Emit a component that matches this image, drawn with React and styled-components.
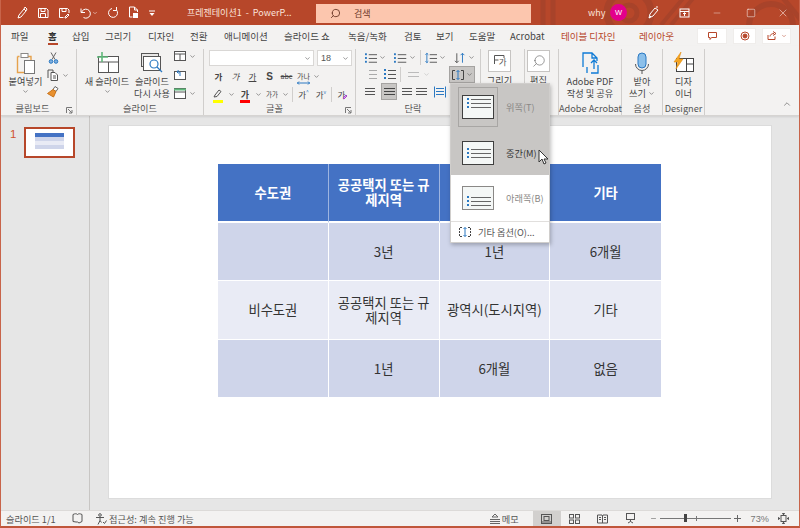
import React from 'react'
import styled, { createGlobalStyle } from 'styled-components'
import { ChevronDown, Search, Minus, Square, X, ChevronUp } from 'lucide-react'

const Global = createGlobalStyle`
  * { box-sizing: border-box; }
  html, body { margin: 0; padding: 0; }
  body { font-family: "Noto Sans CJK KR", "Noto Sans", sans-serif; background: #b7472a; }
`

const Win = styled.div`
  width: 800px;
  height: 528px;
  display: flex;
  flex-direction: column;
  background: #f3f2f1;
  border: 1px solid #c8644a;
  border-top: 0;
  border-bottom: 2px solid #c0563b;
  overflow: hidden;
  position: relative;
`

/* ---------- title bar ---------- */
const TitleBar = styled.div`
  height: 25px;
  flex: none;
  background: #b7472a;
  display: flex;
  align-items: center;
  color: #fff;
  position: relative;
  overflow: hidden;
  padding-left: 15px;
`
const Pattern = styled.svg`
  position: absolute;
  left: 520px;
  top: 0;
`
const Qat = styled.div`
  display: flex;
  align-items: center;
  gap: 9px;
  width: 171px;
  flex: none;
  position: relative;
`
const DocTitle = styled.div`
  width: 129px;
  flex: none;
  font-size: 9px;
  color: #fbe3db;
  white-space: pre;
  position: relative;
`
const SearchBox = styled.div`
  width: 215px;
  height: 19px;
  margin-top: 1px;
  background: #fcc6ae;
  display: flex;
  align-items: center;
  gap: 13px;
  padding-left: 14px;
  font-size: 9px;
  color: #6e3a2a;
  flex: none;
  position: relative;
`
const TitleRight = styled.div`
  margin-left: 57px;
  display: flex;
  align-items: center;
  position: relative;
  flex: 1;
`
const User = styled.span`
  font-size: 9px;
  color: #fbe3db;
  width: 22px;
  flex: none;
`
const Avatar = styled.span`
  width: 17px;
  height: 17px;
  flex: none;
  border-radius: 50%;
  background: #e3008c;
  color: #fff;
  font-size: 7.5px;
  font-family: "Liberation Sans", sans-serif;
  display: flex;
  align-items: center;
  justify-content: center;
`
const TitleBtn = styled.span`
  width: ${p => p.$w}px;
  margin-left: ${p => p.$ml ?? 0}px;
  display: flex;
  justify-content: center;
  flex: none;
`

/* ---------- tabs ---------- */
const TabBar = styled.div`
  height: 21px;
  flex: none;
  display: flex;
  align-items: center;
  padding-left: 10px;
  background: #f3f2f1;
  font-size: 9.5px;
  color: #444;
`
const Tab = styled.span`
  width: ${p => p.$w}px;
  flex: none;
  white-space: nowrap;
  position: relative;
  line-height: 20px;
  color: ${p => (p.$ctx ? '#b7472a' : p.$active ? '#333' : '#444')};
  font-weight: ${p => (p.$active ? 600 : 400)};
`
const TabLine = styled.i`
  position: absolute;
  left: 0;
  bottom: 1px;
  width: 10px;
  height: 2px;
  background: #b7472a;
`
const TabActions = styled.div`
  margin-left: auto;
  display: flex;
  gap: 6px;
  padding-right: 8px;
`
const TabAction = styled.span`
  width: ${p => p.$w}px;
  height: 16px;
  background: #fff;
  border: 1px solid #efedeb;
  display: flex;
  align-items: center;
  justify-content: center;
  gap: 4px;
  color: #b7472a;
`

/* ---------- ribbon ---------- */
const Ribbon = styled.div`
  height: 70px;
  flex: none;
  display: flex;
  background: #f3f2f1;
  border-bottom: 1px solid #d6d4d2;
  box-shadow: 0 1px 2px rgba(0, 0, 0, 0.1);
  position: relative;
  z-index: 1;
`
const Group = styled.div`
  width: ${p => p.$w}px;
  flex: none;
  height: 66px;
  margin-top: 3px;
  border-right: 1px solid #d0cecc;
  display: flex;
  flex-direction: column;
  position: relative;
`
const GroupBody = styled.div`
  flex: 1;
  display: flex;
  min-height: 0;
`
const GroupLabel = styled.div`
  height: 13px;
  line-height: 13px;
  font-size: 9.2px;
  text-align: center;
  color: #555;
  white-space: nowrap;
  padding-right: ${p => p.$pr ?? 0}px;
`
const Launcher = styled.svg`
  position: absolute;
  right: 3px;
  bottom: 1px;
`
const Big = styled.div`
  width: ${p => p.$w}px;
  margin-left: ${p => p.$ml ?? 0}px;
  flex: none;
  display: flex;
  flex-direction: column;
  align-items: center;
  font-size: 9.2px;
  line-height: 11.5px;
  color: #444;
  text-align: center;
  white-space: pre;
`
const BigIcon = styled.div`
  height: 26px;
  padding-top: 3px;
  display: flex;
  align-items: flex-start;
  justify-content: center;
  margin-bottom: 1px;
`
const SmallCol = styled.div`
  display: flex;
  flex-direction: column;
  justify-content: space-between;
  padding: ${p => p.$pad};
`
const Caret = styled(ChevronDown).attrs({ size: 7, strokeWidth: 2 })`
  color: #555;
  flex: none;
`
const IconRow = styled.div`
  display: flex;
  align-items: center;
  gap: ${p => p.$gap ?? 3}px;
`
const FontCol = styled.div`
  display: flex;
  flex-direction: column;
  padding: 1px 0 0 5px;
  gap: 4px;
`
const FontInputs = styled.div`
  display: flex;
  gap: 3px;
`
const Input = styled.div`
  width: ${p => p.$w}px;
  height: 16px;
  background: #fff;
  border: 1px solid #d9d7d5;
  display: flex;
  align-items: center;
  justify-content: space-between;
  padding: 0 2px 0 3px;
  font-size: 9px;
  color: #555;
  font-family: "Liberation Sans", sans-serif;
`
const FontBtns = styled.div`
  display: flex;
  align-items: center;
  gap: ${p => p.$gap ?? 3}px;
  height: ${p => p.$h}px;
  padding-left: 2px;
`
const Glyph = styled.span`
  width: ${p => p.$w || 15}px;
  flex: none;
  text-align: center;
  font-size: ${p => p.$size || 8.5}px;
  color: #444;
  font-weight: ${p => (p.$bold ? 700 : 400)};
  text-decoration: ${p => p.$deco || 'none'};
  position: relative;
  line-height: 11px;
`
const Swatch = styled.i`
  position: absolute;
  left: 2px;
  right: 2px;
  bottom: -3px;
  height: 3px;
  background: ${p => p.$c};
`
const Spread = styled.svg`
  position: absolute;
  left: 1px;
  bottom: -3px;
`
const Sup = styled.sup`
  font-size: 5px;
  color: #2b79c2;
  line-height: 0;
`
const VRule = styled.i`
  width: 1px;
  height: 15px;
  margin-left: ${p => p.$ml ?? 0}px;
  margin-right: ${p => p.$mr ?? 0}px;
  background: #d0cecc;
  flex: none;
`
const ParaCol = styled.div`
  display: flex;
  flex-direction: column;
  gap: 2px;
  width: 119px;
  padding: 1px 0 0 9px;
`
const ParaRow = styled.div`
  display: flex;
  align-items: center;
  gap: ${p => p.$gap ?? 3}px;
  height: 15px;
`
const Pressed = styled.span`
  display: inline-flex;
  align-items: center;
  justify-content: center;
  gap: 2px;
  flex: none;
  margin-left: ${p => (p.$push ? 'auto' : 0)};
  width: ${p => p.$w}px;
  height: 17px;
  background: #c8c6c4;
  border: 1px solid #a5a3a1;
`
const BoxBtn = styled.div`
  width: 23px;
  height: 22px;
  background: #fff;
  border: 1px solid #c6c4c2;
  display: flex;
  align-items: center;
  justify-content: center;
  flex: none;
`
const Stub = styled.div`
  display: flex;
  flex-direction: column;
  align-items: center;
  gap: 1px;
  padding: 1px 6px 0 0;
  width: 100%;
  font-size: 9.2px;
  color: #444;
`
const BoxGlyph = styled.span`
  position: relative;
  width: 14px;
  height: 14px;
  font-size: 8.5px;
  line-height: 14px;
  text-align: right;
  color: #555;
`
const BoxCorner = styled.svg`
  position: absolute;
  left: 0;
  top: 0;
`
const Collapse = styled(ChevronUp)`
  position: absolute;
  right: 7px;
  bottom: 6px;
  color: #555;
`

/* ---------- dropdown ---------- */
const Menu = styled.div`
  position: absolute;
  left: 449px;
  top: 83px;
  width: 100px;
  height: 160px;
  background: #fff;
  border: 1px solid #d0cecc;
  box-shadow: 1px 2px 4px rgba(0, 0, 0, 0.25);
  z-index: 5;
  display: flex;
  flex-direction: column;
`
const MenuItem = styled.div`
  height: ${p => p.$h}px;
  flex: none;
  background: ${p => (p.$on ? '#c8c6c4' : 'transparent')};
  display: flex;
  align-items: center;
  padding-left: 11px;
  gap: 12px;
  font-size: 9.2px;
  color: ${p => p.$color};
`
const MenuIconWrap = styled.span`
  width: 40px;
  height: 40px;
  margin: 0 -4px;
  display: flex;
  align-items: center;
  justify-content: center;
  flex: none;
  border: ${p => (p.$box ? '1px solid #a8a6a4' : '0')};
`
const MenuFoot = styled.div`
  flex: 1;
  border-top: 1px solid #e1dfdd;
  display: flex;
  align-items: center;
  padding-left: 8px;
  gap: 7px;
  font-size: 9.2px;
  color: #555;
`
const Cursor = styled.svg`
  position: absolute;
  left: 537px;
  top: 149px;
  z-index: 6;
`

/* ---------- workspace ---------- */
const Workspace = styled.div`
  flex: 1;
  min-height: 0;
  display: flex;
  background: #e6e6e6;
`
const Sidebar = styled.div`
  width: 89px;
  flex: none;
  border-right: 1px solid #c8c6c4;
  padding: 11px 0 0 9px;
  display: flex;
  gap: 7px;
  align-items: flex-start;
`
const SlideNum = styled.span`
  font-size: 11.5px;
  line-height: 15px;
  width: 7px;
  color: #d0532f;
  font-family: "Liberation Sans", sans-serif;
`
const Thumb = styled.div`
  width: 51px;
  height: 31px;
  background: #fff;
  border: 2px solid #b7472a;
  padding: 4px 9px 0;
`
const ThumbRow = styled.div`
  height: ${p => p.$h}px;
  background: ${p => p.$c};
`
const Stage = styled.div`
  flex: 1;
  padding: 9px 0 0 18px;
`
const Slide = styled.div`
  width: 664px;
  height: 374px;
  background: #fff;
  border: 1px solid #dcdcdc;
  padding: 38px 0 0 109px;
`
const Table = styled.div`
  width: 443px;
  display: grid;
  grid-template-columns: repeat(4, 1fr);
  grid-auto-rows: 58.5px;
`
const Cell = styled.div`
  display: flex;
  align-items: center;
  justify-content: center;
  text-align: center;
  padding: 0 7px;
  font-size: 13.3px;
  line-height: 15px;
  word-break: break-all;
  font-weight: ${p => (p.$head ? 700 : 400)};
  color: ${p => (p.$head ? '#fff' : '#333')};
  background: ${p => (p.$head ? '#4472c4' : p.$odd ? '#cfd5ea' : '#e9ebf5')};
  border-right: 1px solid ${p => (p.$head ? '#9db4e0' : '#fff')};
  border-bottom: ${p => (p.$head ? 2 : 1)}px solid #fff;
  &:nth-child(4n) { border-right: 0; }
`

/* ---------- status bar ---------- */
const Status = styled.div`
  height: 16px;
  flex: none;
  display: flex;
  align-items: center;
  padding: 0 10px 0 5px;
  font-size: 9.2px;
  color: #555;
  background: #f3f2f1;
  border-top: 1px solid #dcdad8;
`
const StatusGroup = styled.div`
  display: flex;
  align-items: center;
  gap: ${p => p.$gap ?? 0}px;
  margin-left: ${p => p.$ml ?? 0}px;
  color: ${p => p.$color || 'inherit'};
  font-family: ${p => (p.$latin ? '"Liberation Sans", sans-serif' : 'inherit')};
`
const PageCount = styled.span`
  width: 66px;
  flex: none;
`
const StatusRight = styled.div`
  margin-left: auto;
  display: flex;
  align-items: center;
`
const ViewBtn = styled.span`
  width: 28px;
  height: 15px;
  display: flex;
  align-items: center;
  justify-content: center;
  background: ${p => (p.$on ? '#d2d0ce' : 'transparent')};
`
const Zoom = styled.div`
  width: 71px;
  height: 1px;
  background: #777;
  position: relative;
  margin: 0 3px;
`
const Knob = styled.i`
  position: absolute;
  left: 24px;
  top: -4px;
  width: 3px;
  height: 8px;
  background: #444;
`
const Tick = styled.i`
  position: absolute;
  left: 36px;
  top: -2px;
  width: 1px;
  height: 5px;
  background: #777;
`

/* ---------- icons ---------- */
const Ic = ({ w = 14, h = 14, c = '#fff', sw = 1, children, ...rest }) => (
  <svg width={w} height={h} viewBox={`0 0 ${w} ${h}`} fill="none" stroke={c} strokeWidth={sw} {...rest}>
    {children}
  </svg>
)

const TextLines = ({ x = 0, y = 0, n = 3, w = 12, c = '#555', gap = 3, bullets, blue = '#2b79c2' }) => (
  <g>
    {Array.from({ length: n }).map((_, i) => (
      <g key={i}>
        {bullets && <rect x={x - 4} y={y + i * gap - 1} width="2" height="2" fill={blue} stroke="none" />}
        <path d={`M${x} ${y + i * gap + 0.5}h${w}`} stroke={c} />
      </g>
    ))}
  </g>
)

const AnchorIcon = ({ start, dark }) => (
  <Ic w={32} h={24} c={dark ? '#3f3f3f' : '#8a8886'}>
    <rect x="0.5" y="0.5" width="31" height="23" fill="#f4f7f6" />
    <TextLines x={9} y={start} n={3} w={20} c="#666" gap={4} bullets />
  </Ic>
)

const Launch = () => (
  <Launcher width="7" height="7" stroke="#777" fill="none">
    <path d="M.5 6V.5H6M2 2l4 4M3 6h3V3" />
  </Launcher>
)

const App = () => (
  <>
    <Global />
    <Win>
      <TitleBar>
        <Pattern width="280" height="25" viewBox="0 0 280 25" fill="none" stroke="#a8432a">
          <path d="M22 0v25M32 0v25" strokeWidth="5" />
          <circle cx="108" cy="13" r="22" strokeWidth="7" />
          <circle cx="108" cy="13" r="8" strokeWidth="5" />
          <path d="M140 25L164 -4M150 25L174 -4" strokeWidth="4" />
          <path d="M190 -2h36" strokeWidth="3" />
          <circle cx="250" cy="26" r="22" strokeWidth="6" />
          <path d="M262 -2L280 20" strokeWidth="5" />
        </Pattern>
        <Qat>
          <Ic w={12} h={13}><path d="M2 12l1-3 5-6 2 2-5 6zM8 3l1-2 2 2-1 2" /></Ic>
          <Ic w={12} h={12}><path d="M1.500 1.500h8l1.500 1.500v7.500h-9.500zM4 1.500v3h4v-3M3.500 10.500v-4h5v4" /></Ic>
          <Ic w={12} h={12}><path d="M1.500 1.500h8l1.500 1.500v3M1.500 1.500v9h4M4 1.500v3h4v-3M7 10l3-3 1 1-3 3h-1z" /></Ic>
          <IconRow $gap={1}>
            <Ic w={12} h={12}><path d="M2 1.500v4h4M2.500 5.500a4.500 4.500 0 1 1 2 5" /></Ic>
            <ChevronDown size={6} color="#fff" />
          </IconRow>
          <Ic w={13} h={13} style={{ marginLeft: -1 }}><path d="M6 2.500a4.500 4.500 0 1 0 4.500 1.500M10.500 1v3.500h-3.500" /></Ic>
          <Ic w={11} h={13}><path d="M1.500 1h5l3 3v2M1.500 1v10h3M6.500 1v3h3" /><rect x="5" y="7" width="5" height="5" fill="#fff" stroke="none" /></Ic>
          <Ic w={8} h={8}><path d="M1 2h6" /><path d="M1.500 4h5l-2.500 3z" fill="#fff" stroke="none" /></Ic>
        </Qat>
        <DocTitle>{'프레젠테이션1  -  PowerP...'}</DocTitle>
        <SearchBox>
          <Search size={11} color="#6e3a2a" style={{ transform: 'scaleX(-1)' }} />
          <span>검색</span>
        </SearchBox>
        <TitleRight>
          <User>why</User>
          <Avatar>W</Avatar>
          <TitleBtn $w={36} $ml={8}>
            <Ic w={13} h={13}><path d="M2 12l1-4 5-6 3 2-5 6zM2 12l2-2M9 1l2 0" /></Ic>
          </TitleBtn>
          <TitleBtn $w={26}>
            <Ic w={11} h={10}><rect x="1" y="1" width="9" height="8" /><path d="M1 3.500h9" /><path d="M5.500 5v3M4 6l1.500-1.500L7 6" /></Ic>
          </TitleBtn>
          <TitleBtn $w={40}><Minus size={10} strokeWidth={1} color="#fff" /></TitleBtn>
          <TitleBtn $w={28}><Square size={10} strokeWidth={1.200} color="#fff" /></TitleBtn>
          <TitleBtn $w={36}><X size={12} strokeWidth={1} color="#fff" /></TitleBtn>
        </TitleRight>
      </TitleBar>

      <TabBar>
        <Tab $w={37}>파일</Tab>
        <Tab $w={24} $active>홈<TabLine /></Tab>
        <Tab $w={33}>삽입</Tab>
        <Tab $w={43}>그리기</Tab>
        <Tab $w={42}>디자인</Tab>
        <Tab $w={34}>전환</Tab>
        <Tab $w={60}>애니메이션</Tab>
        <Tab $w={64}>슬라이드 쇼</Tab>
        <Tab $w={56}>녹음/녹화</Tab>
        <Tab $w={32}>검토</Tab>
        <Tab $w={33}>보기</Tab>
        <Tab $w={41}>도움말</Tab>
        <Tab $w={51}>Acrobat</Tab>
        <Tab $w={78} $ctx>테이블 디자인</Tab>
        <Tab $w={50} $ctx>레이아웃</Tab>
        <TabActions>
          <TabAction $w={30}>
            <Ic w={9} h={8} c="#b7472a"><path d="M.5 .5h8v5h-5l-1.500 2v-2h-1.500z" /></Ic>
          </TabAction>
          <TabAction $w={23}>
            <Ic w={10} h={10} c="#b7472a"><circle cx="5" cy="5" r="4" /><circle cx="5" cy="5" r="2" fill="#b7472a" /></Ic>
          </TabAction>
          <TabAction $w={29}>
            <Ic w={10} h={9} c="#b7472a"><path d="M1 4v4.500h7v-3M3 5.500c0-2 2-3 4-3M6 .5l3 2-3 2" /></Ic>
            <ChevronDown size={6} color="#b7472a" />
          </TabAction>
        </TabActions>
      </TabBar>

      <Ribbon>
        <Group $w={76}>
          <GroupBody>
            <Big $w={43} $ml={3}>
              <BigIcon>
                <Ic w={22} h={22} c="#8a8886">
                  <path d="M2.500 4.500h2M13 4.500h3v4M2.500 4.500v16h7" stroke="#e6a24c" strokeWidth="1.400" />
                  <rect x="6" y="1.500" width="7" height="4" fill="#fff" />
                  <rect x="9.500" y="8.500" width="10" height="13" fill="#fff" stroke="#777" />
                </Ic>
              </BigIcon>
              붙여넣기
              <Caret />
            </Big>
            <SmallCol $pad="3px 0 4px 0">
              <Ic w={11} h={12} c="#666" style={{ marginLeft: 1 }}>
                <path d="M3 .5l4 7M8 .5l-4 7" />
                <circle cx="3" cy="9.500" r="1.800" fill="#7fb0e0" stroke="#2b79c2" />
                <circle cx="8" cy="9.500" r="1.800" fill="#7fb0e0" stroke="#2b79c2" />
              </Ic>
              <IconRow>
                <Ic w={12} h={12} c="#555"><path d="M1 9V1h5v2" /><path d="M4 3.500h4l2.500 2.500v5.500H4z" fill="#fff" /><path d="M6 7h3M6 9h3" /></Ic>
                <Caret />
              </IconRow>
              <Ic w={12} h={12} c="#666">
                <path d="M8 .5l3 2-2 3-3-2z" fill="#fff" />
                <path d="M6 3.500l3 2-2.500 5.500-6-3.500z" fill="#e8912f" stroke="#c9731a" />
              </Ic>
            </SmallCol>
          </GroupBody>
          <GroupLabel $pr={12}>클립보드</GroupLabel>
          <Launch />
        </Group>

        <Group $w={127}>
          <GroupBody>
            <Big $w={48} $ml={6}>
              <BigIcon>
                <Ic w={24} h={22} c="#555">
                  <rect x="3.500" y="4.500" width="20" height="16" fill="#fff" />
                  <path d="M3.500 10h20M13.500 10v10" />
                  <path d="M7 0v10M2 5h11" stroke="#5fb87a" strokeWidth="1.600" />
                </Ic>
              </BigIcon>
              새 슬라이드
              <Caret />
            </Big>
            <Big $w={38} $ml={2}>
              <BigIcon>
                <Ic w={24} h={22} c="#555">
                  <rect x="1.500" y="1.500" width="17" height="13" fill="#e9e8e7" />
                  <rect x="3.500" y="4.500" width="17" height="14" fill="#fff" />
                  <circle cx="14" cy="12" r="4" stroke="#2b79c2" fill="#fff" strokeWidth="1.200" />
                  <path d="M17 15l5 5" stroke="#2b79c2" strokeWidth="1.300" />
                </Ic>
              </BigIcon>
              {'슬라이드\n다시 사용'}
            </Big>
            <SmallCol $pad="2px 0 3px 3px">
              <IconRow>
                <Ic w={12} h={10} c="#555"><rect x=".5" y=".5" width="11" height="9" fill="#fff" /><path d="M.5 3h11M6 3v6.500" /></Ic>
                <Caret />
              </IconRow>
              <Ic w={12} h={11} c="#555"><rect x=".5" y="2.500" width="11" height="8" fill="#fff" /><path d="M6 7V3H3l1.500-2M3 3l1.500 1.500" stroke="#2b79c2" /></Ic>
              <IconRow>
                <Ic w={12} h={11} c="#555"><rect x=".5" y=".5" width="11" height="10" fill="#fff" /><path d="M0 1.500h12" stroke="#5fb87a" strokeWidth="2" /><path d="M.5 4h11" /></Ic>
                <Caret />
              </IconRow>
            </SmallCol>
          </GroupBody>
          <GroupLabel>슬라이드</GroupLabel>
        </Group>

        <Group $w={152}>
          <GroupBody>
            <FontCol>
              <FontInputs>
                <Input $w={105}><span /><Caret /></Input>
                <Input $w={35}>18<Caret /></Input>
              </FontInputs>
              <FontBtns $gap={2} $h={13}>
                <Glyph $bold>가</Glyph>
                <Glyph style={{ fontStyle: 'italic' }}>가</Glyph>
                <Glyph $deco="underline">가</Glyph>
                <Glyph $size={10} $bold style={{ fontFamily: 'Liberation Sans' }}>S</Glyph>
                <Glyph $size={7} $deco="line-through">abc</Glyph>
                <Glyph $size={7}>
                  가나
                  <Spread width="13" height="4" viewBox="0 0 13 4" fill="none" stroke="#2b79c2">
                    <path d="M0 2h13M2 .5L.5 2 2 3.500M11 .5L12.500 2 11 3.500" />
                  </Spread>
                </Glyph>
                <Caret />
              </FontBtns>
              <FontBtns $gap={3} $h={16}>
                <Glyph $w={14}>
                  <Ic w={10} h={9} c="#555"><path d="M1 8l1-2 4-5 2 1.500-4 5z" /></Ic>
                  <Swatch $c="#ffff00" />
                </Glyph>
                <Caret />
                <Glyph $w={14} $bold $size={9}>가<Swatch $c="#ff0000" /></Glyph>
                <Caret />
                <Glyph $w={14} $size={6.500}>가가</Glyph>
                <Caret />
                <VRule />
                <Glyph $w={15}>가<Sup>^</Sup></Glyph>
                <Glyph $w={14}>가<Sup>v</Sup></Glyph>
                <VRule />
                <Glyph $w={13}>
                  가
                  <Ic w={6} h={6} c="#a64ac9" style={{ position: 'absolute', right: 0, bottom: 0 }}><path d="M1 4l3-3 1 1-3 3z" fill="#d9a6ee" /></Ic>
                </Glyph>
              </FontBtns>
            </FontCol>
          </GroupBody>
          <GroupLabel $pr={10}>글꼴</GroupLabel>
          <Launch />
        </Group>

        <Group $w={125}>
          <GroupBody>
            <ParaCol>
              <ParaRow $gap={2}>
                <Ic w={13} h={12} c="#555"><TextLines x={4} y={2} n={3} w={9} gap={4} bullets /></Ic>
                <Caret />
                <Ic w={13} h={12} c="#555" style={{ marginLeft: 6 }}><TextLines x={4} y={2} n={3} w={9} gap={4} bullets /></Ic>
                <Caret />
                <VRule $ml={2} $mr={2} />
                <Ic w={13} h={12} c="#555"><path d="M2 1v10M.5 2.500L2 1l1.500 1.500M.5 9.500L2 11l1.500-1.500" stroke="#2b79c2" /><TextLines x={5} y={2} n={3} w={8} gap={4} /></Ic>
                <Caret />
                <Ic w={13} h={12} c="#555" style={{ marginLeft: 6 }}><path d="M3 1v10M1 9l2 2 2-2" /><path d="M9 11V1M7 3l2-2 2 2" stroke="#2b79c2" /></Ic>
                <Caret />
              </ParaRow>
              <ParaRow $gap={7}>
                <Ic w={12} h={11} c="#aaa"><TextLines x={4} y={1} n={3} w={8} gap={4} c="#aaa" /></Ic>
                <Ic w={12} h={11} c="#555"><TextLines x={4} y={1} n={3} w={8} gap={4} bullets /></Ic>
                <VRule $ml={-3} />
                <Ic w={12} h={8} c="#bbb"><TextLines x={0} y={1} n={2} w={11} gap={4} c="#bbb" /></Ic>
                <Caret style={{ marginLeft: -4, color: '#bbb' }} />
                <Pressed $w={26} $push>
                  <Ic w={12} h={10} c="#444"><path d="M3 .5H.5v9H3M9 .5h2.500v9H9" /><path d="M6 .5v9M4.500 2L6 .5 7.500 2M4.500 8L6 9.500 7.500 8" stroke="#2b79c2" /></Ic>
                  <Caret />
                </Pressed>
              </ParaRow>
              <ParaRow $gap={4}>
                <Ic w={12} h={10} c="#555"><TextLines x={0} y={1} n={3} w={10} gap={3} /></Ic>
                <Pressed $w={16}><Ic w={11} h={10} c="#444"><TextLines x={0} y={1} n={3} w={11} gap={3} c="#444" /></Ic></Pressed>
                <Ic w={11} h={10} c="#555"><TextLines x={1} y={1} n={3} w={10} gap={3} /></Ic>
                <Ic w={11} h={10} c="#555"><TextLines x={0} y={1} n={3} w={11} gap={3} /></Ic>
                <Ic w={12} h={12} c="#2b79c2" style={{ marginLeft: 3 }}><path d="M.5 .5v11M11.500 .5v11" /><TextLines x={2} y={2} n={3} w={8} gap={3} c="#2b79c2" /></Ic>
              </ParaRow>
            </ParaCol>
          </GroupBody>
          <GroupLabel $pr={10}>단락</GroupLabel>
        </Group>

        <Group $w={44}>
          <Stub>
            <BoxBtn>
              <BoxGlyph>
                <BoxCorner width="14" height="14" fill="none" stroke="#555">
                  <path d="M1.500 10V1.500H11V4M1.500 6h4" />
                </BoxCorner>
                가
              </BoxGlyph>
            </BoxBtn>
            그리기
          </Stub>
        </Group>
        <Group $w={34}>
          <Stub>
            <BoxBtn>
              <Search size={14} strokeWidth={1} color="#555" style={{ transform: 'scaleX(-1)' }} />
            </BoxBtn>
            편집
          </Stub>
        </Group>
        <Group $w={63}>
          <GroupBody>
            <Big $w={62}>
              <BigIcon>
                <Ic w={19} h={22} c="#0f7bd6" sw={1.300}>
                  <path d="M2 15V1h9l5 5v3M11 1v5h5" />
                  <path d="M6 21v-6M10 21h7v-8M13 17v-9M10 11l3-3 3 3" />
                </Ic>
              </BigIcon>
              {'Adobe PDF\n작성 및 공유'}
            </Big>
          </GroupBody>
          <GroupLabel>Adobe Acrobat</GroupLabel>
        </Group>
        <Group $w={41}>
          <GroupBody>
            <Big $w={40}>
              <BigIcon>
                <Ic w={16} h={23} c="#555">
                  <rect x="4" y="1" width="8" height="15" rx="4" fill="#8cc0ea" stroke="#2b79c2" />
                  <path d="M1.500 12a6.500 6.500 0 0 0 13 0M8 19v3" />
                </Ic>
              </BigIcon>
              <span>{'받아\n쓰기 '}<Caret /></span>
            </Big>
          </GroupBody>
          <GroupLabel>음성</GroupLabel>
        </Group>
        <Group $w={42}>
          <GroupBody>
            <Big $w={41}>
              <BigIcon>
                <Ic w={22} h={22} c="#444">
                  <rect x="3.500" y="6.500" width="17" height="13" fill="#fff" />
                  <path d="M13.500 6.500v13M13.500 12h7" />
                  <path d="M8 0L1 10h4l-2 7 7-10H6z" fill="#f5a623" stroke="#e58e12" strokeWidth=".6" />
                </Ic>
              </BigIcon>
              {'디자\n이너'}
            </Big>
          </GroupBody>
          <GroupLabel>Designer</GroupLabel>
        </Group>
        <Collapse size={10} strokeWidth={1.500} />
      </Ribbon>

      <Menu>
        <MenuItem $h={46} $on $color="#8a8886">
          <MenuIconWrap $box><AnchorIcon start={4} dark /></MenuIconWrap>
          위쪽(T)
        </MenuItem>
        <MenuItem $h={45} $on $color="#333">
          <MenuIconWrap><AnchorIcon start={8} dark /></MenuIconWrap>
          중간(M)
        </MenuItem>
        <MenuItem $h={46} $color="#8a8886">
          <MenuIconWrap><AnchorIcon start={11} /></MenuIconWrap>
          아래쪽(B)
        </MenuItem>
        <MenuFoot>
          <Ic w={12} h={10} c="#444"><path d="M3 .5H.5v9H3M9 .5h2.500v9H9" strokeDasharray="2 1" /><path d="M6 .5v9M4.500 2L6 .5 7.500 2M4.500 8L6 9.500 7.500 8" stroke="#2b79c2" /></Ic>
          기타 옵션(O)...
        </MenuFoot>
      </Menu>
      <Cursor width="11" height="16" viewBox="0 0 11 16">
        <path d="M1 1v12l3-3 2 5 2-1-2-4h4z" fill="#fff" stroke="#333" strokeWidth="1" />
      </Cursor>

      <Workspace>
        <Sidebar>
          <SlideNum>1</SlideNum>
          <Thumb>
            <ThumbRow $h={4} $c="#4472c4" />
            <ThumbRow $h={4} $c="#cfd5ea" />
            <ThumbRow $h={4} $c="#e9ebf5" />
            <ThumbRow $h={4} $c="#cfd5ea" />
          </Thumb>
        </Sidebar>
        <Stage>
          <Slide>
            <Table>
              <Cell $head>수도권</Cell>
              <Cell $head>공공택지 또는 규제지역</Cell>
              <Cell $head />
              <Cell $head>기타</Cell>
              <Cell $odd />
              <Cell $odd>3년</Cell>
              <Cell $odd>1년</Cell>
              <Cell $odd>6개월</Cell>
              <Cell>비수도권</Cell>
              <Cell>공공택지 또는 규제지역</Cell>
              <Cell>광역시(도시지역)</Cell>
              <Cell>기타</Cell>
              <Cell $odd />
              <Cell $odd>1년</Cell>
              <Cell $odd>6개월</Cell>
              <Cell $odd>없음</Cell>
            </Table>
          </Slide>
        </Stage>
      </Workspace>

      <Status>
        <PageCount>슬라이드 1/1</PageCount>
        <Ic w={11} h={11} c="#555"><path d="M1 1.500c2-1 3.500-1 4.500 0 1-1 2.500-1 4.500 0v7l-3 1.500-1.500-1-1.500 0-3-.5z" /></Ic>
        <StatusGroup $ml={12} $gap={2}>
          <Ic w={12} h={12} c="#555"><circle cx="5" cy="2" r="1.300" /><path d="M1 4.500h8M5 4.500v3l-2 4M5 7.500l1.500 2M8 9l1.500 1.500 2-3" /></Ic>
          접근성: 계속 진행 가능
        </StatusGroup>
        <StatusRight>
          <StatusGroup $gap={1}>
            <Ic w={12} h={12} c="#666"><path d="M6 1L3 4h6zM1 6.500h10M1 8.500h10M1 10.500h10" /></Ic>
            메모
          </StatusGroup>
          <StatusGroup $ml={14}>
            <ViewBtn $on><Ic w={11} h={10} c="#555"><rect x=".5" y=".5" width="10" height="9" /><rect x="3" y="2.500" width="5" height="4" /><path d="M.5 8h10" /></Ic></ViewBtn>
            <ViewBtn><Ic w={11} h={10} c="#555"><rect x=".5" y=".5" width="4" height="3.500" /><rect x="6.500" y=".5" width="4" height="3.500" /><rect x=".5" y="6" width="4" height="3.500" /><rect x="6.500" y="6" width="4" height="3.500" /></Ic></ViewBtn>
            <ViewBtn><Ic w={11} h={10} c="#555"><path d="M.5 1h4.500l.5 1 .5-1h4.500v8h-10zM5.500 2v7M2 3.500h2M2 5.500h2M7 3.500h2M7 5.500h2" /></Ic></ViewBtn>
            <ViewBtn><Ic w={11} h={11} c="#555"><rect x="1.500" y=".5" width="8" height="6" /><path d="M5.500 6.500v2M3 10l2.500-1.500L8 10" /></Ic></ViewBtn>
          </StatusGroup>
          <StatusGroup $ml={5} $color="#666">
            <Minus size={7} />
            <Zoom><Knob /><Tick /></Zoom>
            <svg width="7" height="7" viewBox="0 0 7 7" stroke="#666"><path d="M0 3.500h7M3.500 0v7" /></svg>
          </StatusGroup>
          <StatusGroup $ml={10} $latin $color="#777">73%</StatusGroup>
          <StatusGroup $ml={9}>
            <Ic w={11} h={11} c="#555"><rect x="3" y="2.500" width="5" height="6" /><path d="M5.500 0v2M4 1l1.500-1L7 1M5.500 9v2M4 10l1.500 1L7 10M0 5.500h2M1 4L0 5.500 1 7M9 5.500h2M10 4l1 1.500L10 7" /></Ic>
          </StatusGroup>
        </StatusRight>
      </Status>
    </Win>
  </>
)

export default App
